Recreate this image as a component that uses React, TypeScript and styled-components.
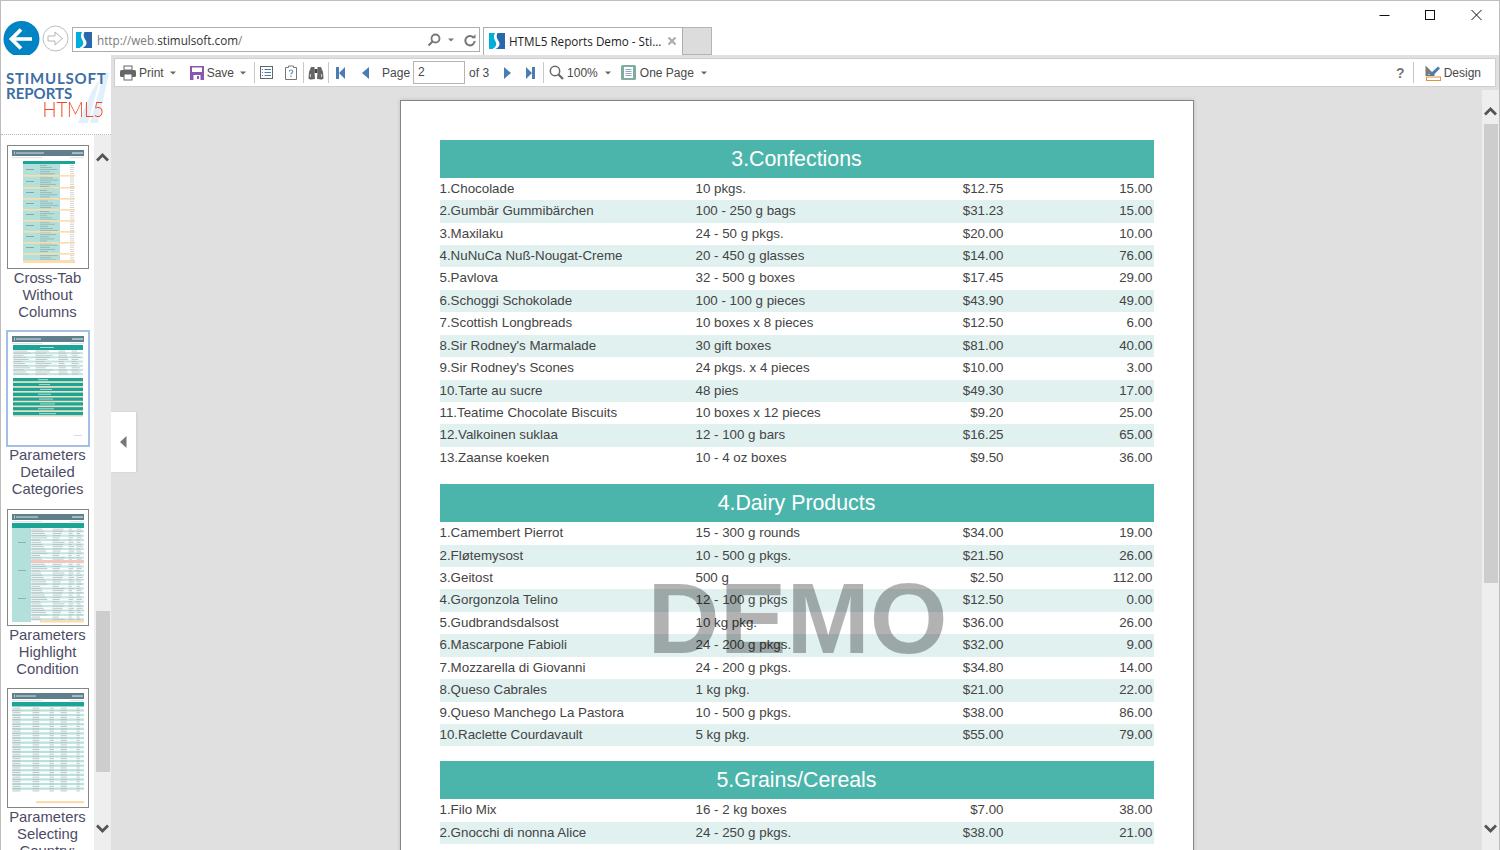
import React from "react";
import styled, { createGlobalStyle } from "styled-components";

const Global = createGlobalStyle`
  html, body { margin: 0; padding: 0; height: 850px; overflow: hidden; background: #fff; }
  #root { width: 1500px; height: 850px; }
  * { box-sizing: border-box; }
`;

const Frame = styled.div`
  width: 1500px; height: 850px; overflow: hidden;
  border-top: 1px solid #bdbdbd; border-left: 1px solid #bdbdbd; border-right: 1px solid #bdbdbd;
  display: flex; flex-direction: column;
  font-family: "Liberation Sans", Arial, sans-serif; background: #fff;
`;

/* browser chrome */
const Chrome = styled.header`
  height: 54px; flex: none; display: flex; align-items: flex-start; overflow: hidden; background: #fff;
`;
const BackButton = styled.svg`width: 38px; height: 38px; margin: 20px 0 0 2px; flex: none;`;
const ForwardButton = styled.svg`width: 27px; height: 27px; margin: 24px 0 0 1px; flex: none;`;
const AddressBar = styled.div`
  width: 408px; height: 25px; margin: 26px 0 0 3px; border: 1px solid #adadad; flex: none;
  display: flex; align-items: center; padding: 0 2px 0 3px; gap: 5px;
  font-family: "Open Sans", sans-serif; font-size: 11.7px; color: #333;
`;
const Url = styled.div`flex: 1; white-space: nowrap;`;
const UrlDim = styled.span`color: #7a7a7a;`;
const AddressIcons = styled.div`display: flex; align-items: center; gap: 7px;`;
const BrowserTab = styled.div`
  width: 200px; height: 29px; margin: 26px 0 0 3px; border: 1px solid #adadad; border-bottom: none; flex: none;
  display: flex; align-items: center; padding: 0 5px 2px 5px; gap: 4px;
  font-family: "Open Sans", sans-serif; font-size: 11.7px; color: #222; white-space: nowrap;
`;
const TabTitle = styled.div`flex: 1; overflow: hidden;`;
const NewTab = styled.div`
  width: 29px; height: 28px; margin: 26px 0 0 0; background: #dcdcdc; border: 1px solid #b4b4b4; border-left: none; flex: none;
`;
const WindowButtons = styled.div`
  margin: 8px 17px 0 auto; display: flex; align-items: center; gap: 35px;
`;

/* body */
const Body = styled.div`flex: 1; display: flex; min-height: 0;`;
const Sidebar = styled.aside`width: 110px; flex: none; display: flex; flex-direction: column; background: #fff;`;
const Logo = styled.div`
  position: relative; height: 80px; flex: none; padding: 16px 0 0 5px; border-bottom: 1px dotted #bbb; overflow: hidden;
  color: #3e6ea3;
`;
const LogoSwoosh = styled.svg`position: absolute; left: 75px; top: 18px; width: 34px; height: 50px;`;
const LogoLine = styled.div<{ $spacing: number }>`
  position: relative; font-family: "Lato", "Open Sans", sans-serif; font-weight: 700; font-size: 15px; line-height: 15px;
  letter-spacing: ${p => p.$spacing}px; white-space: nowrap;
`;
const LogoHtml = styled.div`
  position: relative; font-family: "Lato", sans-serif; font-weight: 300; font-size: 18.5px; line-height: 17px; color: #f0451e;
  text-align: right; width: 98px; margin-top: 0; transform: scaleY(1.15); transform-origin: 50% 50%;
`;
const SideColumns = styled.div`flex: 1; display: flex; min-height: 0;`;
const ThumbList = styled.div`
  width: 93px; flex: none; overflow: hidden; padding-top: 10px;
  display: flex; flex-direction: column; align-items: center; gap: 10px;
`;
const ThumbItem = styled.div`display: flex; flex-direction: column; align-items: center; flex: none; width: 100%;`;
const ThumbFrame = styled.div<{ $h: number; $selected?: boolean }>`
  width: ${p => (p.$selected ? 84 : 82)}px; height: ${p => p.$h}px; background: #fff; flex: none;
  border: ${p => (p.$selected ? "2px solid #a4bfe6" : "1px solid #858585")};
  margin-top: ${p => (p.$selected ? -1 : 0)}px;
  svg { display: block; width: 100%; height: 100%; }
`;
const ThumbLabel = styled.div<{ $selected?: boolean }>`
  font-size: 14.8px; line-height: 17px; color: #4c4c66; text-align: center; margin-top: ${p => (p.$selected ? 0 : 1)}px;
  margin-bottom: ${p => (p.$selected ? 1 : 0)}px; width: 92px;
`;
const ScrollBar = styled.div<{ $w: number; $top?: number }>`
  width: ${p => p.$w}px; flex: none; background: #eeeeee; display: flex; flex-direction: column; align-items: center;
  margin-top: ${p => p.$top ?? 0}px;
`;
const ScrollArrow = styled.div<{ $h: number; $pad?: number }>`
  height: ${p => p.$h}px; flex: none; width: 100%; display: flex; justify-content: center;
  align-items: ${p => (p.$pad ? "flex-start" : "center")}; padding-top: ${p => p.$pad ?? 0}px;
`;
const ScrollThumb = styled.div<{ $h: number; $top: number }>`
  width: 14px; height: ${p => p.$h}px; margin-top: ${p => p.$top}px; background: #cdcdcd; flex: none;
`;
const Spacer = styled.div`flex: 1;`;

const Main = styled.main`position: relative; flex: 1; min-width: 0; display: flex; flex-direction: column; background: #e0e0e0;`;
const Toolbar = styled.div`
  height: 29px; margin: 3px 3px 0 3px; flex: none; background: #fff; border: 1px solid #cfcfcf;
  display: flex; align-items: center; font-size: 12px; color: #484848; white-space: nowrap;
`;
const Tool = styled.div<{ $l: number }>`
  margin-left: ${p => p.$l}px; flex: none; display: flex; align-items: center;
`;
const HelpMark = styled(Tool)`font-size: 14px; font-weight: 700; color: #777;`;
const ToolSep = styled.div<{ $l: number }>`
  margin-left: ${p => p.$l}px; width: 1px; height: 21px; background: #c8c8c8; flex: none;
`;
const PageInput = styled.div`
  margin-left: 3px; width: 52px; height: 23px; border: 1px solid #b4b4b4; padding: 0 4px; line-height: 20px; flex: none; font-size: 12px;
`;
const Content = styled.div`flex: 1; display: flex; min-height: 0;`;
const ScrollView = styled.div`flex: 1; min-width: 0; overflow: hidden; display: flex; justify-content: center; padding-top: 13px;`;
const Page = styled.div`
  position: relative; width: 794px; height: 900px; flex: none; background: #fff; border: 1px solid #858585;
  padding: 39px 39px 0; box-shadow: 0 0 4px rgba(0,0,0,.15);
  font-size: 13.33px; color: #444;
`;
const Group = styled.section`margin-bottom: 15.05px;`;
const GroupTitle = styled.div`
  height: 37.8px; background: #4cb5ab; color: #fff; font-size: 21.33px; line-height: 38px; text-align: center;
`;
const Row = styled.div<{ $alt: boolean }>`
  height: 22.43px; line-height: 22px; display: grid; grid-template-columns: 256px 1fr 100px 149px; padding-right: 1px;
  background: ${p => (p.$alt ? "#e0f1f0" : "#fff")}; white-space: nowrap;
`;
const Num = styled.div`text-align: right;`;
const Watermark = styled.div`
  position: absolute; left: 247px; top: 460px; font-size: 100px; line-height: 115px; font-weight: 700;
  color: rgba(0,0,0,.3); pointer-events: none; white-space: nowrap;
`;
const CollapseTab = styled.div`
  position: absolute; left: 0; top: 357px; width: 25px; height: 60px; background: #fff;
  display: flex; align-items: center; justify-content: center; box-shadow: 1px 0 2px rgba(0,0,0,.08);
`;

/* icons */
const Favicon = () => (
  <svg width="16" height="16" viewBox="0 0 16 16" style={{ flex: "none" }}>
    <rect width="16" height="16" fill="#00aede" />
    <path d="M8 0H16V16H6C10 14 11 11 9 8C7 5 7 2 8 0Z" fill="#2a68ae" />
    <path d="M6 0H8.500C7 2.500 7.500 5 9.500 8C11.500 11 10.500 14 6.500 16H3.500C7.500 13.500 8 11 6.500 8.500C4.500 5.500 4.500 2.500 6 0Z" fill="#fff" />
  </svg>
);
const Caret = ({ c = "#666", w = 6 }: { c?: string; w?: number }) => (
  <svg width={w} height="4" viewBox="0 0 6 4"><path d="M0 0.500H6L3 3.500Z" fill={c} /></svg>
);
const NavIcon = ({ d }: { d: string }) => (
  <svg width="9" height="12" viewBox="0 0 9 12"><path d={d} fill="#4a7db3" /></svg>
);
const Chevron = ({ up }: { up: boolean }) => (
  <svg width="13" height="9" viewBox="0 0 13 9">
    <path d={up ? "M1 7.500L6.500 2L12 7.500" : "M1 1.500L6.500 7L12 1.500"} fill="none" stroke="#555" strokeWidth="2.800" />
  </svg>
);

/* thumbnails: tiny blurred report drawings */
const SOFT = "#b4bcbd";
const Soft = ({ id, children }: { id: string; children: React.ReactNode }) => (
  <>
    <defs><filter id={id} x="0" y="0" width="100%" height="100%"><feGaussianBlur stdDeviation="0.28" /></filter></defs>
    <g filter={`url(#${id})`}>{children}</g>
  </>
);
const r = (x: number, y: number, w: number, h: number, f: string, k: string) => <rect key={k} x={x} y={y} width={w} height={h} fill={f} />;
function tableLines(x0: number, y0: number, cols: number[], rows: number, rh: number, alt: string, seed: number) {
  const out: React.ReactNode[] = [];
  for (let i = 0; i < rows; i++) {
    const y = y0 + i * rh;
    if (i % 2) out.push(r(x0, y, cols[cols.length - 1] - x0, rh, alt, `b${i}`));
    cols.slice(0, -1).forEach((c, j) => {
      const w = (cols[j + 1] - c) * (0.4 + (((i + 2) * (j + 3) * seed) % 7) / 17);
      out.push(r(c + 0.5, y + rh * 0.3, w, Math.max(0.7, rh * 0.38), SOFT, `t${i}-${j}`));
    });
  }
  return out;
}
const ThumbHead = ({ w, title }: { w: number; title: number }) => (
  <>
    <rect x="4" y="4" width={w - 8} height="6" fill="#5e7f8d" />
    <rect x="6" y="5.500" width="0.800" height="3" fill="#d5dfe3" />
    <rect x="8" y="6.400" width={title} height="1.300" fill="#b9cbd2" />
    <rect x={w - 16} y="6.400" width="11" height="1.300" fill="#cfdbdf" />
    <rect x="4" y="11.500" width={w * 0.38} height="0.600" fill="#c8cdce" />
    <rect x={w - 18} y="11.500" width="14" height="0.600" fill="#c8cdce" />
  </>
);
const Thumb1 = () => {
  const starts = [19, 31, 42, 53, 64, 75, 86, 97];
  return (
    <svg viewBox="0 0 80 122">
      <Soft id="s1">
        <ThumbHead w={80} title={28} />
        <rect x="15" y="15" width="52" height="3" fill="#1fa596" />
        <rect x="15" y="18" width="37" height="96" fill="#b4e0dc" />
        {Array.from({ length: 46 }).map((_, i) => (
          <g key={i}>
            <rect x="32" y={19 + i * 2.1} width={7 + ((i * 5) % 12)} height="0.800" fill="#8fb0ad" />
            <rect x="62" y={19 + i * 2.1} width="4" height="0.800" fill="#c9c9c9" />
          </g>
        ))}
        {starts.map(s => (
          <g key={s}>
            <rect x="18" y={s + 4} width="8" height="1" fill="#86a8a5" />
            <rect x="15" y={s + 10} width="52" height="1.600" fill="#fcdcae" />
          </g>
        ))}
        <rect x="15" y="114" width="52" height="3" fill="#fcdcae" />
      </Soft>
    </svg>
  );
};
const Thumb2 = () => (
  <svg viewBox="0 0 80 113">
    <Soft id="s2">
      <ThumbHead w={80} title={25} />
      <rect x="5" y="13" width="70" height="5" fill="#1fa596" />
      <rect x="32" y="15" width="14" height="1" fill="#a8dcd6" />
      {tableLines(5, 18, [5, 27, 50, 63, 75], 12, 2.1, "#c4e6e3", 3)}
      {Array.from({ length: 8 }).map((_, i) => {
        const y = 46 + i * 4.85;
        return (
          <g key={i}>
            <rect x="5" y={y} width="70" height="3.500" fill="#1fa596" />
            <rect x="5" y={y + 3.500} width="70" height="1.300" fill="#f9deb4" />
            <rect x={30 + (i % 3)} y={y + 1.200} width={10 + i} height="1" fill="#a8dcd6" />
          </g>
        );
      })}
      <rect x="66" y="103" width="8" height="0.800" fill="#d0d0d0" />
    </Soft>
  </svg>
);
const Thumb3 = () => (
  <svg viewBox="0 0 80 115">
    <Soft id="s3">
      <ThumbHead w={80} title={22} />
      <rect x="4" y="13" width="72" height="5" fill="#1fa596" />
      <rect x="4" y="18" width="19" height="94" fill="#b4e0dc" />
      {tableLines(23, 18, [23, 44, 60, 68, 76], 42, 2.2, "#c4e6e3", 5)}
      <rect x="23" y="50" width="53" height="2.500" fill="#f9c4bd" />
      <rect x="10" y="32" width="8" height="0.800" fill="#86a8a5" />
      <rect x="10" y="60" width="8" height="0.800" fill="#86a8a5" />
      <rect x="10" y="88" width="8" height="0.800" fill="#86a8a5" />
      <rect x="32" y="110" width="44" height="2.500" fill="#fcdcae" />
    </Soft>
  </svg>
);
const Thumb4 = () => (
  <svg viewBox="0 0 80 118">
    <Soft id="s4">
      <ThumbHead w={80} title={20} />
      <rect x="4" y="13" width="72" height="4.500" fill="#1fa596" />
      {tableLines(4, 18, [4, 24, 41, 52, 68, 76], 37, 2.3, "#b9e2de", 7)}
      <rect x="28" y="112" width="48" height="2.200" fill="#fcdcae" />
    </Soft>
  </svg>
);

type Item = [string, string, string, string];
const groups: { title: string; items: Item[] }[] = [
  { title: "3.Confections", items: [
    ["1.Chocolade", "10 pkgs.", "$12.75", "15.00"],
    ["2.Gumbär Gummibärchen", "100 - 250 g bags", "$31.23", "15.00"],
    ["3.Maxilaku", "24 - 50 g pkgs.", "$20.00", "10.00"],
    ["4.NuNuCa Nuß-Nougat-Creme", "20 - 450 g glasses", "$14.00", "76.00"],
    ["5.Pavlova", "32 - 500 g boxes", "$17.45", "29.00"],
    ["6.Schoggi Schokolade", "100 - 100 g pieces", "$43.90", "49.00"],
    ["7.Scottish Longbreads", "10 boxes x 8 pieces", "$12.50", "6.00"],
    ["8.Sir Rodney's Marmalade", "30 gift boxes", "$81.00", "40.00"],
    ["9.Sir Rodney's Scones", "24 pkgs. x 4 pieces", "$10.00", "3.00"],
    ["10.Tarte au sucre", "48 pies", "$49.30", "17.00"],
    ["11.Teatime Chocolate Biscuits", "10 boxes x 12 pieces", "$9.20", "25.00"],
    ["12.Valkoinen suklaa", "12 - 100 g bars", "$16.25", "65.00"],
    ["13.Zaanse koeken", "10 - 4 oz boxes", "$9.50", "36.00"],
  ]},
  { title: "4.Dairy Products", items: [
    ["1.Camembert Pierrot", "15 - 300 g rounds", "$34.00", "19.00"],
    ["2.Fløtemysost", "10 - 500 g pkgs.", "$21.50", "26.00"],
    ["3.Geitost", "500 g", "$2.50", "112.00"],
    ["4.Gorgonzola Telino", "12 - 100 g pkgs", "$12.50", "0.00"],
    ["5.Gudbrandsdalsost", "10 kg pkg.", "$36.00", "26.00"],
    ["6.Mascarpone Fabioli", "24 - 200 g pkgs.", "$32.00", "9.00"],
    ["7.Mozzarella di Giovanni", "24 - 200 g pkgs.", "$34.80", "14.00"],
    ["8.Queso Cabrales", "1 kg pkg.", "$21.00", "22.00"],
    ["9.Queso Manchego La Pastora", "10 - 500 g pkgs.", "$38.00", "86.00"],
    ["10.Raclette Courdavault", "5 kg pkg.", "$55.00", "79.00"],
  ]},
  { title: "5.Grains/Cereals", items: [
    ["1.Filo Mix", "16 - 2 kg boxes", "$7.00", "38.00"],
    ["2.Gnocchi di nonna Alice", "24 - 250 g pkgs.", "$38.00", "21.00"],
  ]},
];

const thumbs = [
  { h: 124, lines: ["Cross-Tab", "Without", "Columns"], art: <Thumb1 /> },
  { h: 117, selected: true, lines: ["Parameters", "Detailed", "Categories"], art: <Thumb2 /> },
  { h: 117, lines: ["Parameters", "Highlight", "Condition"], art: <Thumb3 /> },
  { h: 120, lines: ["Parameters", "Selecting", "Country:"], art: <Thumb4 /> },
];

export default function App() {
  return (
    <Frame>
      <Global />
      <Chrome>
        <BackButton viewBox="0 0 38 38">
          <circle cx="18.500" cy="18" r="18" fill="#0084c4" />
          <path d="M8 18H29" stroke="#fff" strokeWidth="3.600" />
          <path d="M18 8.500L8.500 18L18 27.500" fill="none" stroke="#fff" strokeWidth="3.800" />
        </BackButton>
        <ForwardButton viewBox="0 0 27 27">
          <circle cx="13.500" cy="13.500" r="12.500" fill="none" stroke="#bdbdbd" />
          <path d="M6 11H13V7L20.500 13.500L13 20V16H6Z" fill="none" stroke="#b5b5b5" />
        </ForwardButton>
        <AddressBar>
          <Favicon />
          <Url><UrlDim>http://web.</UrlDim>stimulsoft.com<UrlDim>/</UrlDim></Url>
          <AddressIcons>
            <svg width="14" height="14" viewBox="0 0 14 14">
              <circle cx="8.500" cy="5.500" r="4" fill="none" stroke="#777" strokeWidth="1.800" />
              <path d="M5.500 8.500L1.500 12.500" stroke="#777" strokeWidth="2.200" />
            </svg>
            <Caret c="#777" />
            <svg width="14" height="14" viewBox="0 0 14 14" style={{ marginLeft: 2 }}>
              <path d="M10.500 4.500A4.700 4.700 0 1 0 11.700 8" fill="none" stroke="#777" strokeWidth="2" />
              <path d="M8.500 5.200H12.500V1.200Z" fill="#777" />
            </svg>
          </AddressIcons>
        </AddressBar>
        <BrowserTab>
          <Favicon />
          <TabTitle>HTML5 Reports Demo - Sti...</TabTitle>
          <svg width="10" height="10" viewBox="0 0 10 10">
            <path d="M1.500 1.500L8.500 8.500M8.500 1.500L1.500 8.500" stroke="#aaa" strokeWidth="2" />
          </svg>
        </BrowserTab>
        <NewTab />
        <WindowButtons>
          <svg width="11" height="12" viewBox="0 0 11 12"><path d="M0.500 6.500H10.500" stroke="#111" /></svg>
          <svg width="11" height="12" viewBox="0 0 11 12"><rect x="0.500" y="1.500" width="9" height="9" fill="none" stroke="#111" /></svg>
          <svg width="11" height="12" viewBox="0 0 11 12"><path d="M0.500 1L10.500 11M10.500 1L0.500 11" stroke="#111" /></svg>
        </WindowButtons>
      </Chrome>
      <Body>
        <Sidebar>
          <Logo>
            <LogoSwoosh viewBox="0 0 34 50">
              <path d="M14 50L28 0H33L22 50Z" fill="#e3effb" />
              <path d="M2 50L16 18L24 6L12 50Z" fill="#e3effb" />
            </LogoSwoosh>
            <LogoLine $spacing={0.8}>STIMULSOFT</LogoLine>
            <LogoLine $spacing={0}>REPORTS</LogoLine>
            <LogoHtml>HTML5</LogoHtml>
          </Logo>
          <SideColumns>
            <ThumbList>
              {thumbs.map(t => (
                <ThumbItem key={t.lines.join()}>
                  <ThumbFrame $h={t.h} $selected={t.selected}>{t.art}</ThumbFrame>
                  <ThumbLabel $selected={t.selected}>{t.lines.map(l => <div key={l}>{l}</div>)}</ThumbLabel>
                </ThumbItem>
              ))}
            </ThumbList>
            <ScrollBar $w={17}>
              <ScrollArrow $h={44}><Chevron up /></ScrollArrow>
              <ScrollThumb $h={161} $top={432} />
              <Spacer />
              <ScrollArrow $h={44}><Chevron up={false} /></ScrollArrow>
            </ScrollBar>
          </SideColumns>
        </Sidebar>
        <Main>
          <Toolbar>
            <Tool $l={5}>
              <svg width="16" height="16" viewBox="0 0 16 16">
                <rect x="4" y="1" width="8" height="4" fill="none" stroke="#666" />
                <rect x="0" y="5" width="16" height="7" rx="1.500" fill="#666" />
                <rect x="4" y="9" width="8" height="6" fill="#fff" stroke="#666" />
              </svg>
            </Tool>
            <Tool $l={3}>Print</Tool>
            <Tool $l={6}><Caret /></Tool>
            <Tool $l={14}>
              <svg width="14" height="14" viewBox="0 0 14 14">
                <path d="M0 0H14V14H0Z" fill="#8a56ae" />
                <rect x="2" y="1.500" width="10" height="4.500" fill="#fff" />
                <rect x="3.500" y="9" width="7" height="5" fill="#fff" />
                <rect x="7" y="10" width="2" height="3" fill="#8a56ae" />
              </svg>
            </Tool>
            <Tool $l={3}>Save</Tool>
            <Tool $l={6}><Caret /></Tool>
            <ToolSep $l={8} />
            <Tool $l={5}>
              <svg width="13" height="13" viewBox="0 0 13 13">
                <rect x="0.500" y="0.500" width="12" height="12" fill="none" stroke="#666" />
                <path d="M2 3.500H3M4.500 3.500H11M2 6.500H3M4.500 6.500H11M2 9.500H3M4.500 9.500H11" stroke="#4a7db3" />
              </svg>
            </Tool>
            <Tool $l={12}>
              <svg width="12" height="15" viewBox="0 0 12 15">
                <path d="M0.500 2.500H3.500V1H8.500V2.500H11.500V14.500H0.500Z" fill="none" stroke="#777" />
                <path d="M4.300 6.500C4.300 4.500 7.700 4.500 7.700 6.500C7.700 8 6 8 6 9.500M6 10.500V12" fill="none" stroke="#6d93c4" strokeWidth="1.200" />
              </svg>
            </Tool>
            <ToolSep $l={6} />
            <Tool $l={4}>
              <svg width="16" height="14" viewBox="0 0 16 14">
                <path d="M1 6L3 1H6.500V6L7 12.500C7 13.500 1 14 0.500 12.500Z" fill="#666" />
                <path d="M15 6L13 1H9.500V6L9 12.500C9 13.500 15 14 15.500 12.500Z" fill="#666" />
                <rect x="6.500" y="3" width="3" height="4" fill="#444" />
                <path d="M2.500 8V11M13.500 8V11" stroke="#ccc" />
              </svg>
            </Tool>
            <ToolSep $l={4} />
            <Tool $l={7}><NavIcon d="M0 0H3V12H0ZM9 0V12L3 6Z" /></Tool>
            <Tool $l={17}><NavIcon d="M7 0V12L0 6Z" /></Tool>
            <Tool $l={11}>Page</Tool>
            <PageInput>2</PageInput>
            <Tool $l={4}>of 3</Tool>
            <Tool $l={14}><NavIcon d="M1 0V12L8 6Z" /></Tool>
            <Tool $l={14}><NavIcon d="M6 0H9V12H6ZM0 0V12L6 6Z" /></Tool>
            <ToolSep $l={8} />
            <Tool $l={5}>
              <svg width="15" height="15" viewBox="0 0 15 15">
                <circle cx="6" cy="6" r="4.700" fill="none" stroke="#666" strokeWidth="1.500" />
                <path d="M9.500 9.500L14 14" stroke="#666" strokeWidth="2.200" />
              </svg>
            </Tool>
            <Tool $l={3}>100%</Tool>
            <Tool $l={7}><Caret /></Tool>
            <Tool $l={10}>
              <svg width="15" height="15" viewBox="0 0 15 15">
                <rect width="15" height="15" rx="1.500" fill="#7fae9f" />
                <rect x="3" y="2" width="9" height="11" fill="#fff" />
                <path d="M4.500 4.500H10.500M4.500 6.500H10.500M4.500 8.500H10.500M4.500 10.500H10.500" stroke="#8aa6c4" />
              </svg>
            </Tool>
            <Tool $l={4}>One Page</Tool>
            <Tool $l={7}><Caret /></Tool>
            <Spacer />
            <HelpMark $l={0}>?</HelpMark>
            <ToolSep $l={8} />
            <Tool $l={11}>
              <svg width="16" height="16" viewBox="0 0 16 16">
                <path d="M0.500 0.500L9.500 9.500V11H0.500Z" fill="#7a7a7a" />
                <path d="M3.500 8.500L3.500 10L5 10Z" fill="#fff" />
                <path d="M6 8L13 1.500L15 3.500L8 10.500L5 11Z" fill="#4a7db3" />
                <rect x="1.500" y="12" width="14" height="3.500" fill="#fff" stroke="#e8913c" />
              </svg>
            </Tool>
            <Tool $l={3}>Design</Tool>
            <Tool $l={14} />
          </Toolbar>
          <Content>
            <ScrollView>
              <Page>
                {groups.map(g => (
                  <Group key={g.title}>
                    <GroupTitle>{g.title}</GroupTitle>
                    {g.items.map((it, i) => (
                      <Row key={it[0]} $alt={i % 2 === 1}>
                        <div>{it[0]}</div>
                        <div>{it[1]}</div>
                        <Num>{it[2]}</Num>
                        <Num>{it[3]}</Num>
                      </Row>
                    ))}
                  </Group>
                ))}
                <Watermark>DEMO</Watermark>
              </Page>
            </ScrollView>
            <ScrollBar $w={17} $top={3}>
              <ScrollArrow $h={34} $pad={17}><Chevron up /></ScrollArrow>
              <ScrollThumb $h={459} $top={0} />
              <Spacer />
              <ScrollArrow $h={44}><Chevron up={false} /></ScrollArrow>
            </ScrollBar>
          </Content>
          <CollapseTab>
            <svg width="7" height="12" viewBox="0 0 7 12"><path d="M6.500 0V12L0 6Z" fill="#777" /></svg>
          </CollapseTab>
        </Main>
      </Body>
    </Frame>
  );
}
